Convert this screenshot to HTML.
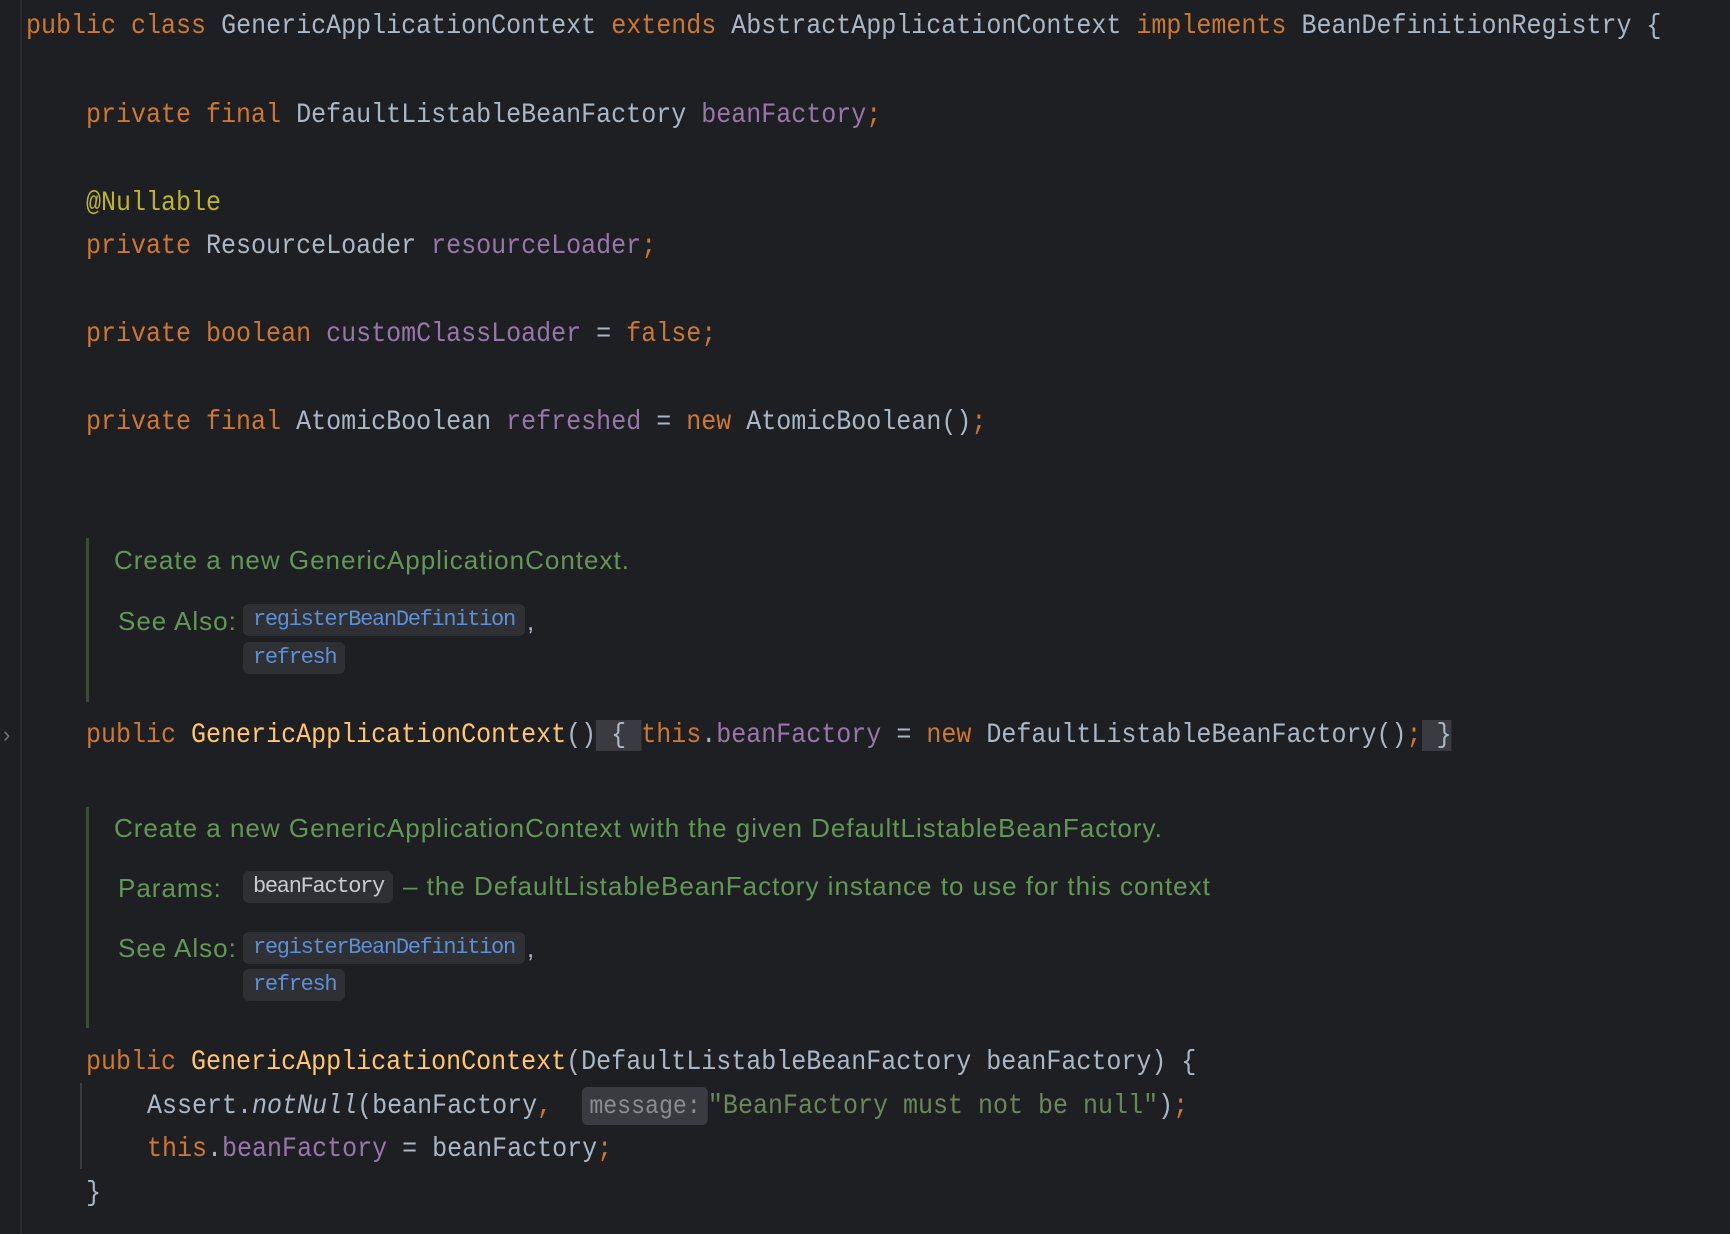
<!DOCTYPE html>
<html><head><meta charset="utf-8"><style>
html,body{margin:0;padding:0}
body{width:1730px;height:1234px;background:#1e1f22;position:relative;overflow:hidden;font-family:"Liberation Mono",monospace}
.g{position:absolute;left:20px;top:0;width:2px;height:1234px;background:#2b2d30}
.l{position:absolute;height:44px;line-height:44px;font-size:28px;white-space:pre;transform:scaleX(0.893);transform-origin:0 50%;color:#a9b7c6}
.k{color:#cc7832}.f{color:#9876aa}.a{color:#bbb529}.m{color:#ffc66d}.s{color:#6a8759}
.fold{background:#393b40}
.hint{background:#393b40;color:#8a8c90;border-radius:6px;padding:4px 8px;font-size:26px}
.bar{position:absolute;left:86px;width:3px;background:#3c4a38}
.d{position:absolute;font-family:"Liberation Sans",sans-serif;font-size:26px;letter-spacing:1px;color:#629755;white-space:pre;line-height:32px}
.p{position:absolute;height:32px;line-height:32px;border-radius:6px;background:#2e3034;font-family:"Liberation Mono",monospace;font-size:22px;letter-spacing:-1.3px;color:#5c8fd6;padding:0 10px;box-sizing:border-box}
.p.gr{color:#c8cbd0}
</style></head><body>
<div class="g"></div>
<div class="l" style="left:26px;top:5px"><span class="k">public class </span>GenericApplicationContext <span class="k">extends </span>AbstractApplicationContext <span class="k">implements </span>BeanDefinitionRegistry {</div>
<div class="l" style="left:86px;top:94px"><span class="k">private final </span>DefaultListableBeanFactory <span class="f">beanFactory</span><span class="k">;</span></div>
<div class="l" style="left:86px;top:182px"><span class="a">@Nullable</span></div>
<div class="l" style="left:86px;top:225px"><span class="k">private </span>ResourceLoader <span class="f">resourceLoader</span><span class="k">;</span></div>
<div class="l" style="left:86px;top:313px"><span class="k">private boolean </span><span class="f">customClassLoader</span> = <span class="k">false;</span></div>
<div class="l" style="left:86px;top:401px"><span class="k">private final </span>AtomicBoolean <span class="f">refreshed</span> = <span class="k">new </span>AtomicBoolean()<span class="k">;</span></div>

<div class="bar" style="top:538px;height:164px"></div>
<div class="d" style="left:114px;top:544px">Create a new GenericApplicationContext.</div>
<div class="d" style="left:118px;top:605px">See Also:</div>
<div class="p" style="left:243px;top:604px;width:282px">registerBeanDefinition</div>
<div class="d" style="left:527px;top:605px;color:#a9b7c6">,</div>
<div class="p" style="left:243px;top:642px;width:102px">refresh</div>

<div style="position:absolute;left:3px;top:722px;color:#6f737a;font-size:22px;font-family:'Liberation Sans',sans-serif">›</div>
<div class="l" style="left:86px;top:714px"><span class="k">public </span><span class="m">GenericApplicationContext</span>()<span class="fold"> { </span><span class="k">this</span>.<span class="f">beanFactory</span> = <span class="k">new </span>DefaultListableBeanFactory()<span class="k">;</span><span class="fold"> }</span></div>

<div class="bar" style="top:807px;height:221px"></div>
<div class="d" style="left:114px;top:812px">Create a new GenericApplicationContext with the given DefaultListableBeanFactory.</div>
<div class="d" style="left:118px;top:872px">Params:</div>
<div class="p gr" style="left:243px;top:871px;width:150px">beanFactory</div>
<div class="d" style="left:403px;top:870px">– the DefaultListableBeanFactory instance to use for this context</div>
<div class="d" style="left:118px;top:932px">See Also:</div>
<div class="p" style="left:243px;top:932px;width:282px">registerBeanDefinition</div>
<div class="d" style="left:527px;top:932px;color:#a9b7c6">,</div>
<div class="p" style="left:243px;top:969px;width:102px">refresh</div>

<div style="position:absolute;left:80px;top:1083px;width:2px;height:86px;background:#393b40"></div>
<div class="l" style="left:86px;top:1041px"><span class="k">public </span><span class="m">GenericApplicationContext</span>(DefaultListableBeanFactory beanFactory) {</div>
<div class="l" style="left:147px;top:1084px">Assert.<i>notNull</i>(beanFactory<span class="k">,</span>  <span class="hint">message:</span><span class="s">"BeanFactory must not be null"</span>)<span class="k">;</span></div>
<div class="l" style="left:147px;top:1128px"><span class="k">this</span>.<span class="f">beanFactory</span> = beanFactory<span class="k">;</span></div>
<div class="l" style="left:86px;top:1172px">}</div>
</body></html>
